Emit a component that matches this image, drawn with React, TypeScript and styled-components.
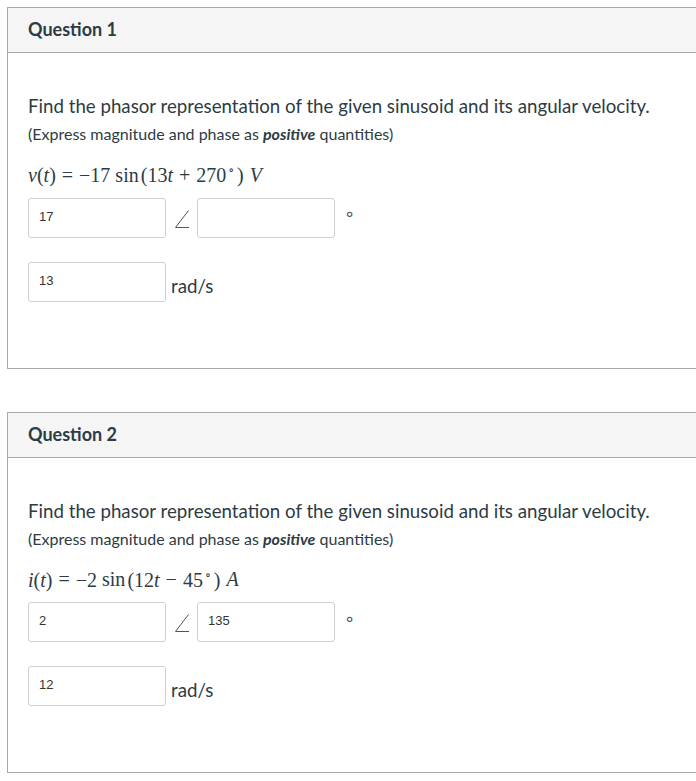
import React from 'react';
import styled, {createGlobalStyle} from 'styled-components';

const GlobalStyle = createGlobalStyle`
    html, body {
        margin: 0;
        padding: 0;
        background: #fff;
        overflow: hidden;
    }
    body {
        font-family: Lato, "Open Sans", sans-serif;
        color: #2d3b45;
    }
`;

interface QuestionData {
    title: string;
    fn: string;
    coef: string;
    freq: string;
    sign: string;
    phase: string;
    unit: string;
    magnitude: string;
    angle: string;
    omega: string;
}

const questions: QuestionData[] = [
    {title: 'Question 1', fn: 'v', coef: '17', freq: '13', sign: '+', phase: '270', unit: 'V', magnitude: '17', angle: '', omega: '13'},
    {title: 'Question 2', fn: 'i', coef: '2', freq: '12', sign: '\u2212', phase: '45', unit: 'A', magnitude: '2', angle: '135', omega: '12'},
];

const AngleIcon = () => (
    <svg width="16" height="20" viewBox="0 0 16 20">
        <polyline points="14.5,1.5 1.5,18.5 15,18.5" fill="none" stroke="#555" strokeWidth="1" />
    </svg>
);

const Question = ({q}: {q: QuestionData}) => (
    <Card>
        <Header>{q.title}</Header>
        <Body>
            <Prompt>Find the phasor representation of the given sinusoid and its angular velocity.</Prompt>
            <Note>(Express magnitude and phase as <b><i>positive</i></b> quantities)</Note>
            <MathLine>
                <Var>{q.fn}</Var>(<Var>t</Var>)<Op>=</Op>{'\u2212'}{q.coef}<Fn>sin</Fn>({q.freq}<Var>t</Var><Op>{q.sign}</Op>{q.phase}<Deg>{'\u2218'}</Deg>)<Unit>{q.unit}</Unit>
            </MathLine>
            <Row>
                <Field value={q.magnitude} />
                <Angle><AngleIcon /></Angle>
                <Field value={q.angle} />
                <Degree>{'\u2218'}</Degree>
            </Row>
            <Row $second>
                <Field value={q.omega} />
                <Suffix>rad/s</Suffix>
            </Row>
        </Body>
    </Card>
);

const Field = ({value}: {value: string}) => <Input type="text" defaultValue={value} readOnly />;

const App = () => (
    <Page>
        <GlobalStyle />
        {questions.map((q) => <Question key={q.title} q={q} />)}
    </Page>
);

const Page = styled.div`
    padding: 7px 0 0 7px;
    display: flex;
    flex-direction: column;
    gap: 43px;
`;

const Card = styled.div`
    width: 720px;
    border: 1px solid #aaaaaa;
    background: #fff;
`;

const Header = styled.div`
    height: 45px;
    display: flex;
    align-items: center;
    padding-left: 20px;
    padding-bottom: 2px;
    box-sizing: border-box;
    background: #f5f5f5;
    border-bottom: 1px solid #aaaaaa;
    font-weight: 700;
    font-size: 18px;
    color: #2d3b45;
`;

const Body = styled.div`
    padding: 40px 20px 66px 20px;
`;

const Prompt = styled.div`
    font-size: 18.7px;
    line-height: 27px;
    color: #2d3b45;
`;

const Note = styled.div`
    margin-top: 3px;
    font-size: 16px;
    line-height: 22px;
    color: #2d3b45;
`;

const MathLine = styled.div`
    margin-top: 12px;
    font-family: "Liberation Serif", "DejaVu Serif", serif;
    font-size: 20px;
    line-height: 26px;
    color: #2d3b45;
`;

const Var = styled.i`
    font-style: italic;
`;

const Op = styled.span`
    margin: 0 6px;
`;

const Fn = styled.span`
    margin: 0 2px 0 5px;
`;

const Deg = styled.sup`
    font-size: 12px;
    margin: 0 3px 0 2px;
`;

const Unit = styled.i`
    margin-left: 6px;
`;

const Row = styled.div<{$second?: boolean}>`
    display: flex;
    align-items: center;
    margin-top: ${(p) => (p.$second ? '24px' : '10px')};
`;

const Input = styled.input`
    box-sizing: border-box;
    width: 138px;
    height: 40px;
    padding: 0 10px 3px 10px;
    border: 1px solid #cfcfcf;
    border-radius: 3px;
    font-family: "Liberation Sans", Arial, sans-serif;
    font-size: 13px;
    color: #333;
    background: #fff;
    outline: none;
`;

const Angle = styled.span`
    width: 31px;
    display: flex;
    justify-content: center;
    align-self: flex-end;
    padding-bottom: 9px;
`;

const Degree = styled.span`
    margin-left: 9px;
    padding-bottom: 8px;
    font-family: "DejaVu Sans", sans-serif;
    font-size: 18px;
    color: #555;
`;

const Suffix = styled.span`
    align-self: flex-end;
    margin-left: 5px;
    padding-bottom: 5px;
    font-size: 18.7px;
    line-height: 22px;
    color: #2d3b45;
`;

export default App;
